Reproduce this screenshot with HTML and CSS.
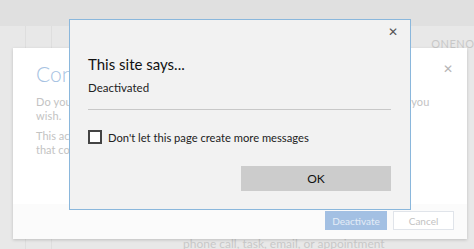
FILE: index.html
```html
<!DOCTYPE html>
<html lang="en">
<head>
    <meta charset="UTF-8">
    <link rel="stylesheet" href="styles.css">
</head>
<body>
    <div class="page">
        <div class="page-top"></div>
        <div class="page-body">
            <div class="grid-col"></div>
            <div class="grid-col"></div>
            <div class="grid-main">
                <p class="page-label">ONENOTE</p>
                <p class="page-hint">phone call, task, email, or appointment</p>
            </div>
        </div>
    </div>

    <div class="confirm-card">
        <div class="confirm-head">
            <p class="confirm-title">Confirm Deactivation</p>
            <span class="confirm-close">&#x2715;</span>
        </div>
        <p class="confirm-text wide">Do you want to deactivate the selected record? You can reactivate it later if you<br>wish.</p>
        <p class="confirm-text">This action will change the status of the record<br>that could affect related records.</p>
        <div class="confirm-foot">
            <button class="btn btn-primary">Deactivate</button>
            <button class="btn btn-cancel">Cancel</button>
        </div>
    </div>

    <div class="alert-box">
        <span class="alert-close">&#x2715;</span>
        <p class="alert-title">This site says...</p>
        <p class="alert-msg">Deactivated</p>
        <div class="alert-rule"></div>
        <label class="alert-check">
            <span class="check-box"></span>
            <span>Don't let this page create more messages</span>
        </label>
        <div class="alert-actions">
            <button class="alert-ok">OK</button>
        </div>
    </div>
</body>
</html>
```

FILE: styles.css
```css
* {
    box-sizing: border-box;
}

body {
    margin: 0;
    width: 474px;
    height: 249px;
    overflow: hidden;
    font-family: 'Lato', sans-serif;
    background-color: #e8e8e8;
    position: relative;
}

p {
    margin: 0;
}

.page {
    display: flex;
    flex-direction: column;
    height: 100%;
}

.page-top {
    height: 26px;
    background-color: #e0e0e0;
    flex-shrink: 0;
}

.page-body {
    display: flex;
    flex: 1;
}

.grid-col {
    width: 26px;
    border-right: 1px solid #dedede;
}

.grid-main {
    flex: 1;
    display: flex;
    flex-direction: column;
    justify-content: space-between;
    padding: 11px 0 0 0;
}

.page-label {
    align-self: flex-end;
    font-size: 11px;
    color: #c8c8c8;
    margin-right: -14px;
    letter-spacing: 0.5px;
}

.page-hint {
    font-size: 12px;
    color: #c9c9c9;
    margin-left: 131px;
    margin-bottom: -2px;
}

/* dialog behind */
.confirm-card {
    position: absolute;
    left: 13px;
    top: 48px;
    width: 454px;
    height: 191px;
    background-color: #fff;
    box-shadow: 0 1px 3px rgba(0, 0, 0, 0.18);
    display: flex;
    flex-direction: column;
    padding: 0 0 0 23px;
}

.confirm-head {
    display: flex;
    justify-content: space-between;
    align-items: flex-start;
    padding-top: 13px;
}

.confirm-title {
    font-size: 21px;
    font-weight: 300;
    color: #a6c2e2;
}

.confirm-close {
    font-size: 12px;
    color: #b5b5b5;
    margin: 0 14px 0 0;
}

.confirm-text {
    font-size: 11px;
    line-height: 14px;
    color: #c3c3c3;
    margin-top: 9px;
}

.confirm-text.wide {
    letter-spacing: 0.15px;
}

.confirm-text + .confirm-text {
    margin-top: 6px;
}

.confirm-foot {
    margin-top: auto;
    margin-left: -23px;
    background-color: #fbfbfb;
    height: 35px;
    display: flex;
    justify-content: flex-end;
    align-items: flex-start;
    gap: 6px;
    padding: 7px 13px 0 0;
}

.btn {
    height: 19px;
    font-family: 'Lato', sans-serif;
    font-size: 10px;
    padding: 0;
}

.btn-primary {
    width: 62px;
    background-color: #a3c0e3;
    color: #e4edf7;
    border: 1px solid #a3c0e3;
}

.btn-cancel {
    width: 61px;
    background-color: #fff;
    color: #c2c2c2;
    border: 1px solid #e0e4ea;
}

/* alert on top */
.alert-box {
    position: absolute;
    left: 69px;
    top: 19px;
    width: 342px;
    height: 191px;
    background-color: #f2f2f2;
    border: 1px solid #8ab7dc;
    padding: 33px 18px 0 18px;
    display: flex;
    flex-direction: column;
}

.alert-close {
    position: absolute;
    right: 12px;
    top: 4px;
    font-size: 12px;
    color: #555;
}

.alert-title {
    font-size: 15px;
    color: #111;
    line-height: 22px;
}

.alert-msg {
    font-size: 11.5px;
    color: #222;
    margin-top: 5px;
    line-height: 16px;
}

.alert-rule {
    height: 1px;
    background-color: #c8c8c8;
    margin-top: 13px;
    margin-right: 1px;
}

.alert-check {
    display: flex;
    align-items: center;
    gap: 6px;
    margin-top: 20px;
    font-size: 11.2px;
    color: #222;
}

.check-box {
    width: 14px;
    height: 14px;
    border: 2px solid #444;
    background-color: #fff;
}

.alert-actions {
    display: flex;
    justify-content: flex-end;
    margin-top: 22px;
    padding-right: 1px;
}

.alert-ok {
    width: 150px;
    height: 25px;
    background-color: #cccccc;
    border: 1px solid #cccccc;
    font-family: 'Lato', sans-serif;
    font-size: 12px;
    color: #111;
    padding: 0;
}
```
